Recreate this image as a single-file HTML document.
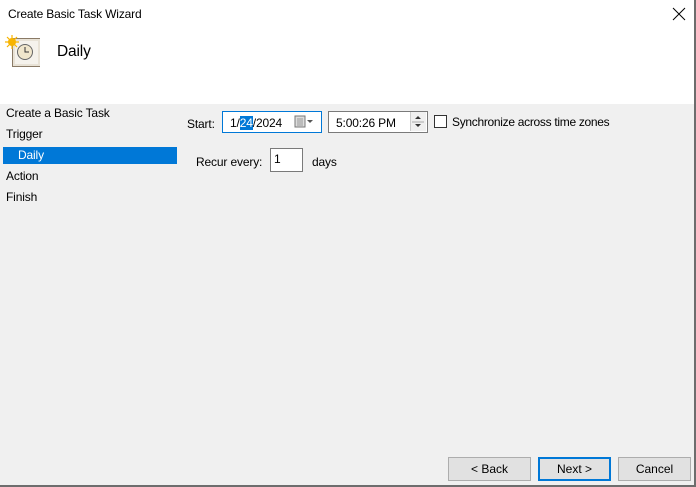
<!DOCTYPE html>
<html><head><style>
body{margin:0;width:696px;height:487px;overflow:hidden;background:#f0f0f0;font-family:"Liberation Sans",sans-serif;font-size:12px;color:#000;position:relative}
.a{position:absolute}
.t{white-space:nowrap;letter-spacing:-0.15px}
</style></head><body>
<div class="a" style="left:0;top:0;width:694px;height:104px;background:#fff"></div>
<div class="a" style="left:694px;top:0;width:2px;height:487px;background:#6d6d6d"></div>
<div class="a" style="left:0;top:485px;width:696px;height:2px;background:#6d6d6d"></div>
<div class="a t" style="left:8px;top:7px;font-size:12px">Create Basic Task Wizard</div>
<svg class="a" style="left:672px;top:7px" width="14" height="14"><path d="M1 1L13 13M13 1L1 13" stroke="#000" stroke-width="1"/></svg>
<svg class="a" style="left:4px;top:35px" width="36" height="34">
<rect x="8.5" y="3.5" width="28" height="28" fill="#e8e2d6" stroke="#8a7a66"/>
<rect x="11" y="6" width="23" height="23" fill="#f5f2ec"/>
<circle cx="21" cy="17" r="7.5" fill="#f0e6cc" stroke="#666"/>
<path d="M21 12v5h4" stroke="#333" fill="none"/>
<circle cx="8" cy="7" r="4" fill="#f8b400"/>
<path d="M8 0v14M1 7h14M3 2l10 10M13 2L3 12" stroke="#f8b400" stroke-width="1.2"/>
</svg>
<div class="a t" style="left:57px;top:43px;font-size:15.5px;color:#000">Daily</div>
<div class="a t" style="left:6px;top:106px">Create a Basic Task</div>
<div class="a t" style="left:6px;top:127px">Trigger</div>
<div class="a" style="left:3px;top:147px;width:174px;height:17px;background:#0078d7"></div>
<div class="a t" style="left:18px;top:148px;color:#fff">Daily</div>
<div class="a t" style="left:6px;top:169px">Action</div>
<div class="a t" style="left:6px;top:190px">Finish</div>
<div class="a t" style="left:187px;top:117px">Start:</div>
<div class="a" style="left:222px;top:111px;width:98px;height:20px;border:1px solid #0078d7;background:#fff"></div>
<div class="a t" style="left:230px;top:116px">1/<span style="background:#0078d7;color:#fff">24</span>/2024</div>
<svg class="a" style="left:294px;top:115px" width="24" height="14"><rect x="1" y="1" width="10" height="11" fill="#ddd" stroke="#777"/><path d="M3 4h6M3 6h6M3 8h6M3 10h6" stroke="#999"/><path d="M13 5h6l-3 3z" fill="#555"/></svg>
<div class="a" style="left:328px;top:111px;width:98px;height:20px;border:1px solid #7a7a7a;background:#fff"></div>
<div class="a t" style="left:336px;top:116px">5:00:26 PM</div>
<div class="a" style="left:410px;top:112px;width:15px;height:19px;background:#f0f0f0;border-left:1px solid #ccc"></div>
<svg class="a" style="left:411px;top:113px" width="14" height="18"><path d="M4 6h6l-3-3zM4 11h6l-3 3z" fill="#333"/><path d="M1 9h12" stroke="#aaa"/></svg>
<div class="a" style="left:434px;top:115px;width:11px;height:11px;border:1px solid #333;background:#fff"></div>
<div class="a t" style="left:452px;top:115px;letter-spacing:-0.3px">Synchronize across time zones</div>
<div class="a t" style="left:196px;top:155px">Recur every:</div>
<div class="a" style="left:270px;top:148px;width:31px;height:22px;border:1px solid #7a7a7a;background:#fff"></div>
<div class="a t" style="left:274px;top:152px">1</div>
<div class="a t" style="left:312px;top:155px">days</div>
<div class="a" style="left:448px;top:457px;width:81px;height:22px;border:1px solid #adadad;background:#e1e1e1;text-align:center;line-height:22px">&lt; Back</div>
<div class="a" style="left:538px;top:457px;width:69px;height:20px;border:2px solid #0078d7;background:#e1e1e1;text-align:center;line-height:20px">Next &gt;</div>
<div class="a" style="left:618px;top:457px;width:71px;height:22px;border:1px solid #adadad;background:#e1e1e1;text-align:center;line-height:22px">Cancel</div>
</body></html>
